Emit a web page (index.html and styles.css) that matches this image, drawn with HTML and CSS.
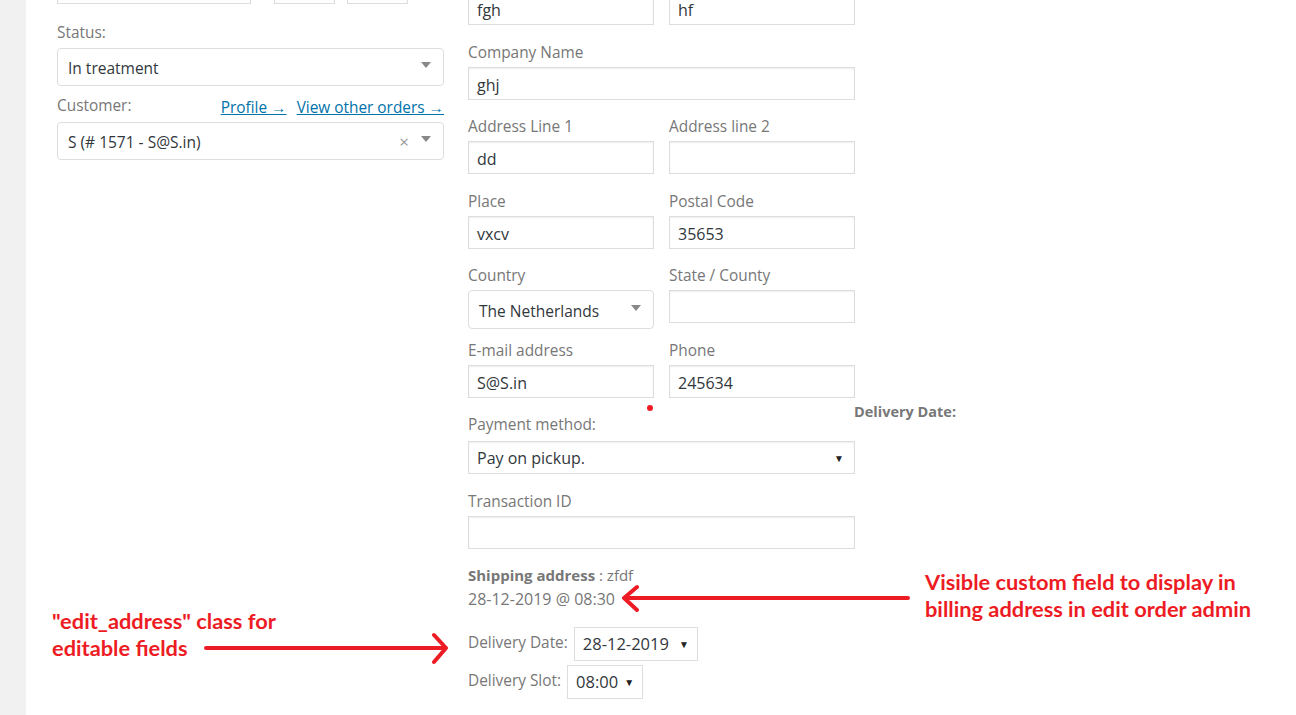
FILE: index.html
```html
<!DOCTYPE html>
<html lang="en">
<head>
  <meta charset="UTF-8">
  <title>Edit order</title>
  <link rel="stylesheet" href="styles.css">
</head>
<body>
  <div class="page">
    <div class="sidebar"></div>

    <div class="main">
      <!-- General -->
      <div class="col col-left">
        <div class="date-row">
          <div class="input date"></div>
          <div class="input hour"></div>
          <div class="input hour"></div>
        </div>

        <label class="lbl lbl-status">Status:</label>
        <div class="select2">
          <span>In treatment</span>
          <span class="s2-arrow"></span>
        </div>

        <div class="customer-head">
          <label class="lbl">Customer:</label>
          <span class="links">
            <a href="#">Profile &rarr;</a>
            <a href="#">View other orders &rarr;</a>
          </span>
        </div>
        <div class="select2">
          <span>S (# 1571 - S@S.in)</span>
          <span class="s2-tools"><span class="s2-clear">&times;</span><span class="s2-arrow"></span></span>
        </div>
      </div>

      <!-- Billing -->
      <div class="col col-right">
        <div class="row">
          <div class="field"><div class="input">fgh</div></div>
          <div class="field"><div class="input">hf</div></div>
        </div>
        <div class="row">
          <div class="field wide"><label class="lbl">Company Name</label><div class="input">ghj</div></div>
        </div>
        <div class="row">
          <div class="field"><label class="lbl">Address Line 1</label><div class="input">dd</div></div>
          <div class="field"><label class="lbl">Address line 2</label><div class="input"></div></div>
        </div>
        <div class="row">
          <div class="field"><label class="lbl">Place</label><div class="input">vxcv</div></div>
          <div class="field"><label class="lbl">Postal Code</label><div class="input">35653</div></div>
        </div>
        <div class="row row-country">
          <div class="field">
            <label class="lbl">Country</label>
            <div class="select2 tall"><span>The Netherlands</span><span class="s2-arrow"></span></div>
          </div>
          <div class="field"><label class="lbl">State / County</label><div class="input"></div></div>
        </div>
        <div class="row">
          <div class="field"><label class="lbl">E-mail address</label><div class="input">S@S.in</div></div>
          <div class="field"><label class="lbl">Phone</label><div class="input">245634</div></div>
        </div>

        <h4 class="side-title">Delivery Date:</h4>

        <div class="row">
          <div class="field wide payment">
            <label class="lbl">Payment method:</label>
            <div class="input native"><span>Pay on pickup.</span><span class="caret">&#9660;</span></div>
          </div>
        </div>
        <div class="row">
          <div class="field wide"><label class="lbl">Transaction ID</label><div class="input"></div></div>
        </div>

        <p class="ship"><strong>Shipping address</strong> : zfdf</p>
        <p class="ship-date">28-12-2019 @ 08:30</p>

        <div class="edit-row">
          <label class="lbl">Delivery Date:</label>
          <div class="native small date-sel"><span>28-12-2019</span><span class="caret">&#9660;</span></div>
        </div>
        <div class="edit-row slot">
          <label class="lbl">Delivery Slot:</label>
          <div class="native small"><span>08:00</span><span class="caret">&#9660;</span></div>
        </div>
      </div>
    </div>
  </div>

  <!-- annotations -->
  <span class="dot"></span>
  <p class="note note-right">Visible custom field to display in<br>billing address in edit order admin</p>
  <p class="note note-left">"edit_address" class for<br>editable fields</p>
  <svg class="arrows" width="1296" height="715" viewBox="0 0 1296 715">
    <g stroke="#ed1c24" stroke-width="4" fill="none" stroke-linecap="round" stroke-linejoin="round">
      <path d="M908 598 L624 598 M637 587 L624 598 L637 610"/>
      <path d="M206 648 L446 648 M434 635 L446 648 L434 662"/>
    </g>
  </svg>
</body>
</html>
```

FILE: styles.css
```css
body {
  margin: 0;
  padding: 0;
  font-family: 'Open Sans', 'Noto Sans', sans-serif;
  background: #fff;
  color: #32373c;
  overflow: hidden;
}

.page {
  display: flex;
  height: 715px;
}

.sidebar {
  width: 26px;
  flex: none;
  background: #f1f1f1;
}

.main {
  display: flex;
  padding-left: 31px;
  gap: 24px;
  align-items: flex-start;
}

.col {
  width: 387px;
}

.col-left {
  margin-top: -29px;
}

.col-right {
  margin-top: -8px;
  position: relative;
}

.lbl {
  display: block;
  font-size: 15.4px;
  line-height: 20.5px;
  color: #777;
}

.field .lbl {
  padding-top: 1.5px;
}

.input {
  box-sizing: border-box;
  height: 33px;
  border: 1px solid #ddd;
  box-shadow: inset 0 1px 2px rgba(0,0,0,0.07);
  background: #fff;
  font-size: 16px;
  line-height: 20px;
  padding: 7px 8px 4px;
  color: #32373c;
}

.date-row {
  display: flex;
}

.date-row .date {
  width: 194px;
}

.date-row .hour {
  width: 61px;
  margin-left: 12px;
}

.date-row .date + .hour {
  margin-left: 23px;
}

.lbl-status {
  margin-top: 19px;
  margin-bottom: 4px;
}

.select2 {
  box-sizing: border-box;
  height: 38px;
  border: 1px solid #ddd;
  border-radius: 4px;
  display: flex;
  align-items: center;
  justify-content: space-between;
  padding: 2px 12px 0 10px;
  font-size: 15.5px;
  color: #32373c;
}

.select2.tall {
  height: 39px;
}

.s2-arrow {
  width: 0;
  height: 0;
  border-style: solid;
  border-width: 6px 5px 0 5px;
  border-color: #888 transparent transparent transparent;
  margin-top: -6px;
}

.s2-tools {
  display: flex;
  align-items: center;
}

.s2-clear {
  color: #999;
  font-size: 17px;
  margin-right: 12px;
  line-height: 1;
}

.customer-head {
  display: flex;
  justify-content: space-between;
  align-items: center;
  margin-top: 10px;
  margin-bottom: 4px;
}

.links a {
  color: #0073aa;
  font-size: 15.4px;
  line-height: 20px;
  margin-left: 6px;
}

.row {
  display: flex;
  gap: 15px;
  margin-bottom: 16px;
}

.row-country {
  margin-bottom: 10px;
}

.field {
  width: 186px;
  display: flex;
  flex-direction: column;
  gap: 3.5px;
}

.field.wide {
  width: 387px;
}

.field.payment {
  gap: 5.5px;
}

.native {
  display: flex;
  align-items: center;
  justify-content: space-between;
  white-space: nowrap;
}

.input.native {
  padding: 0 8px;
}

.caret {
  font-size: 10px;
  color: #222;
  margin-right: 2px;
}

.side-title {
  position: absolute;
  left: 386px;
  top: 410px;
  margin: 0;
  font-size: 14.5px;
  line-height: 20px;
  color: #777;
  white-space: nowrap;
}

.ship,
.ship-date {
  margin: 0;
  font-size: 15px;
  line-height: 24px;
  color: #777;
}

.ship-date {
  font-size: 16px;
}

.ship {
  margin-top: -2px;
}

.edit-row {
  display: flex;
  align-items: center;
  gap: 6px;
  margin-top: 16px;
}

.edit-row.slot {
  margin-top: 4px;
}

.native.small {
  box-sizing: border-box;
  height: 34px;
  border: 1px solid #ddd;
  padding: 0 6px 0 8px;
  font-size: 16.5px;
  gap: 6px;
}

.date-sel {
  width: 124px;
}

.slot .native.small {
  width: 76px;
}

.dot {
  position: absolute;
  left: 647px;
  top: 405px;
  width: 6px;
  height: 6px;
  border-radius: 50%;
  background: #ed1c24;
}

.note {
  position: absolute;
  margin: 0;
  font-family: Lato, 'Open Sans', sans-serif;
  font-weight: bold;
  font-size: 21.8px;
  line-height: 27px;
  color: #ed1c24;
}

.note-right {
  left: 925px;
  top: 568px;
}

.note-left {
  left: 52px;
  top: 607px;
}

.arrows {
  position: absolute;
  left: 0;
  top: 0;
  pointer-events: none;
}
```
